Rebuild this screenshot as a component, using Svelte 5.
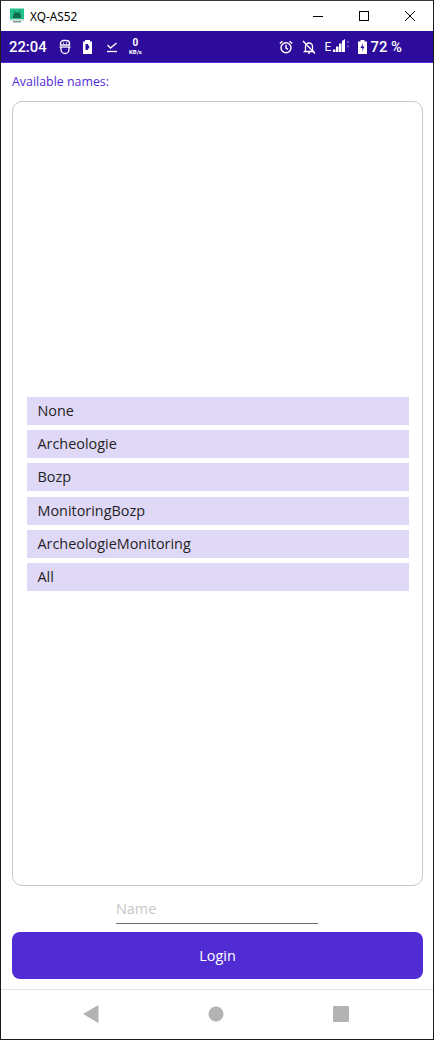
<script lang="ts">
	const names = ['None', 'Archeologie', 'Bozp', 'MonitoringBozp', 'ArcheologieMonitoring', 'All'];
</script>

<div class="window">
	<div class="titlebar">
		<svg class="appicon" width="16" height="16" viewBox="0 0 16 16">
			<rect x="1" y="0.500" width="14" height="10.500" fill="#22c08a" />
			<rect x="1" y="11" width="14" height="2" fill="#c5dcd6" />
			<rect x="4" y="13" width="8" height="1.500" fill="#8a9a96" />
			<path d="M4 8.500a4 4 0 0 1 8 0v1.500H4z" fill="#0f6b52" />
			<path d="M5 3l1.500 2M11 3L9.500 5" stroke="#0f6b52" fill="none" />
		</svg>
		<span class="title">XQ-AS52</span>
		<div class="controls">
			<svg width="12" height="12" viewBox="0 0 12 12"><path d="M1 6.500h10" stroke="#000" fill="none" /></svg>
			<svg width="12" height="12" viewBox="0 0 12 12"><rect x="1.500" y="1.500" width="9" height="9" stroke="#000" fill="none" /></svg>
			<svg width="12" height="12" viewBox="0 0 12 12"><path d="M1 1l10 10M11 1L1 11" stroke="#000" fill="none" /></svg>
		</div>
	</div>

	<div class="statusbar">
		<span class="time">22:04</span>
		<svg class="s1" width="14" height="16" viewBox="0 0 14 16" fill="none" stroke="#fff" stroke-width="1.300">
			<path d="M2.500 6V4.500A3 3 0 0 1 5.500 1.500h3a3 3 0 0 1 3 3V6z" />
			<path d="M3 8v2.500a4 4 0 0 0 8 0V8" />
			<path d="M1.500 8h11" />
			<path d="M5 4h.8M8.200 4h.8" />
		</svg>
		<svg class="s2" width="11" height="16" viewBox="0 0 11 16">
			<path d="M3 1h5v1.500h2V15H1V2.500h2z" fill="#fff" />
			<path d="M3.500 5h2l2 3-2 3h-2z" fill="#2d0c9b" />
		</svg>
		<svg class="s3" width="12" height="12" viewBox="0 0 12 12" fill="none" stroke="#fff" stroke-width="1.300">
			<path d="M1.500 4l3 3 6-5" />
			<path d="M1 10.500h10" />
		</svg>
		<div class="speed"><b>0</b><small>KB/s</small></div>

		<div class="right">
			<svg width="14" height="14" viewBox="0 0 14 14" fill="none" stroke="#fff" stroke-width="1.400">
				<circle cx="7" cy="7.800" r="5" />
				<path d="M7 4.800v3.200l2 1.300M.8 3.500l2.700-2.300M13.200 3.500l-2.700-2.300" />
			</svg>
			<svg class="bell" width="14" height="14" viewBox="0 0 14 14" fill="none" stroke="#fff" stroke-width="1.300">
				<path d="M3.500 10.500V6.500a3.500 3.500 0 0 1 7 0v4l1 1h-9z" />
				<path d="M6 13h2M1 1l12 12.500" />
			</svg>
			<span class="edge">E</span>
			<svg class="signal" width="16" height="13" viewBox="0 0 16 13">
				<path d="M0 13h2.500V10.500H0zM3 13h2.500V7.500H3zM6 13h2.500V4.500H6zM9 13h3V0L9 2z" fill="#fff" />
				<path d="M13.500 4L15 1.500 16.500 4zM13.500 6.500L15 9l1.500-2.500z" fill="#7c68c4" />
			</svg>
			<svg class="battery" width="9" height="14" viewBox="0 0 9 14">
				<path d="M2.500 0h4v1.500H9V14H0V1.500h2.500z" fill="#fff" />
				<path d="M5 3L2.500 8h2L4 11.500 6.500 6.500h-2z" fill="#2d0c9b" />
			</svg>
			<span class="percent">72 %</span>
		</div>
	</div>

	<main>
		<label class="heading" for="name">Available names:</label>
		<div class="listbox">
			<ul>
				{#each names as name}
					<li>{name}</li>
				{/each}
			</ul>
		</div>
		<div class="entry">
			<input id="name" placeholder="Name" />
		</div>
		<button>Login</button>
	</main>

	<nav>
		<svg width="16" height="18" viewBox="0 0 16 18"><path d="M15.500 0v18L0 9z" fill="#b3b3b3" /></svg>
		<svg width="16" height="16" viewBox="0 0 16 16"><circle cx="8" cy="8" r="7.500" fill="#b3b3b3" /></svg>
		<svg width="16" height="16" viewBox="0 0 16 16"><rect width="16" height="16" rx="1" fill="#b3b3b3" /></svg>
	</nav>
</div>

<style>
	:global(body) {
		margin: 0;
		background: #fff;
	}

	.window {
		box-sizing: border-box;
		width: 434px;
		height: 1040px;
		display: flex;
		flex-direction: column;
		border: 1px solid #1c1c1c;
		border-top-color: #3a3a3a;
		font-family: 'Open Sans', sans-serif;
		background: #fff;
	}

	.titlebar {
		height: 30px;
		flex: none;
		display: flex;
		align-items: center;
		padding-left: 8px;
		font-family: 'Noto Sans', sans-serif;
		font-size: 11.800px;
		color: #000;
	}

	.appicon {
		margin-right: 5px;
	}

	.controls {
		margin-left: auto;
		display: flex;
		gap: 34px;
		padding-right: 17px;
	}

	.statusbar {
		box-sizing: border-box;
		height: 32px;
		flex: none;
		display: flex;
		align-items: center;
		padding: 0 8px;
		background: #2d0c9b;
		border-bottom: 1px solid #512bd4;
		color: #fff;
		font-family: Roboto, sans-serif;
	}

	.time {
		font-size: 14.800px;
		font-weight: 500;
		width: 49px;
	}

	.s2 {
		margin-left: 10px;
	}

	.s3 {
		margin-left: 13px;
	}

	.speed {
		margin-left: 11px;
		display: flex;
		flex-direction: column;
		align-items: center;
	}

	.speed b {
		font-size: 10px;
		font-weight: 700;
		line-height: 10px;
	}

	.speed small {
		font-size: 6px;
		font-weight: 700;
		line-height: 7px;
	}

	.right {
		margin-left: auto;
		display: flex;
		align-items: center;
		padding-right: 23px;
	}

	.bell {
		margin-left: 9px;
	}

	.edge {
		font-size: 12px;
		margin-left: 9px;
		width: 8px;
	}

	.signal {
		margin-bottom: 2px;
	}

	.battery {
		margin-left: 9px;
	}

	.percent {
		font-size: 14.800px;
		font-weight: 500;
		margin-left: 4px;
	}

	main {
		flex: 1;
		min-height: 0;
		display: flex;
		flex-direction: column;
		padding: 0 10px 0 11px;
	}

	.heading {
		font-size: 12.400px;
		line-height: 16px;
		margin-top: 11px;
		color: #512bd4;
	}

	.listbox {
		box-sizing: border-box;
		flex: 1;
		min-height: 0;
		margin-top: 11px;
		display: flex;
		align-items: center;
		border: 1px solid #c8c8c8;
		border-radius: 10px;
		padding: 0 13px 0 14px;
	}

	ul {
		list-style: none;
		margin: 1px 0 0;
		padding: 0;
		width: 100%;
		display: flex;
		flex-direction: column;
		gap: 5.300px;
	}

	li {
		height: 28px;
		line-height: 28px;
		padding-left: 10.500px;
		background: #dfd8f7;
		font-size: 14.400px;
		color: #1f1f1f;
	}

	.entry {
		display: flex;
		justify-content: center;
		margin-top: 9px;
		padding-right: 1px;
	}

	input {
		box-sizing: border-box;
		width: 202px;
		height: 29px;
		border: 0;
		border-bottom: 1px solid #6e6e6e;
		padding: 0 0 2px;
		outline: none;
		font-family: inherit;
		font-size: 14.400px;
		background: transparent;
	}

	input::placeholder {
		color: #c8c8c8;
		opacity: 1;
	}

	button {
		height: 47px;
		margin-top: 8px;
		border: 0;
		border-radius: 8px;
		background: #512bd4;
		color: #fff;
		font-family: inherit;
		font-size: 14.400px;
	}

	nav {
		box-sizing: border-box;
		height: 50px;
		margin-top: 10px;
		flex: none;
		border-top: 1px solid #e4e4e4;
		display: flex;
		align-items: center;
		padding: 0 0 2px 82px;
		gap: 109px;
	}
</style>
